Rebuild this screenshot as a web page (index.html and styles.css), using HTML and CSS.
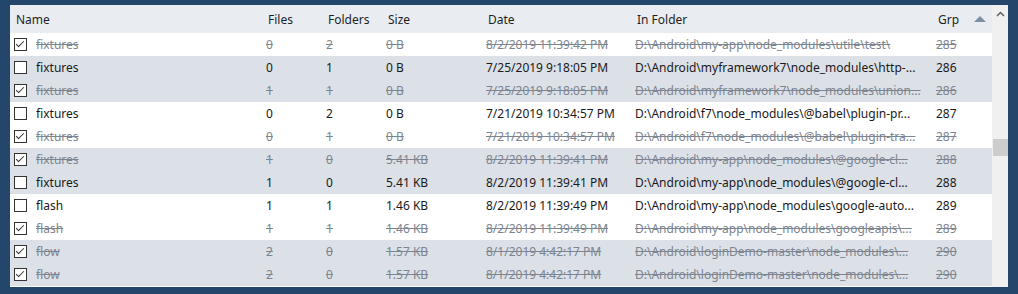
FILE: index.html
```html
<!DOCTYPE html>
<html lang="en">
<head>
    <meta charset="UTF-8">
    <title>Search Results</title>
    <link rel="stylesheet" href="styles.css">
</head>
<body>
    <div id="panel">
        <div class="list">
            <div class="row head">
                <div class="cell">Name</div>
                <div class="cell">Files</div>
                <div class="cell">Folders</div>
                <div class="cell">Size</div>
                <div class="cell">Date</div>
                <div class="cell">In Folder</div>
                <div class="cell grp">Grp <span class="sort"></span></div>
            </div>

            <div class="row done">
                <div class="cell name"><span class="check on"></span><span class="txt">fixtures</span></div>
                <div class="cell"><span class="txt">0</span></div>
                <div class="cell"><span class="txt">2</span></div>
                <div class="cell"><span class="txt">0 B</span></div>
                <div class="cell"><span class="txt">8/2/2019 11:39:42 PM</span></div>
                <div class="cell"><span class="txt">D:\Android\my-app\node_modules\utile\test\</span></div>
                <div class="cell"><span class="txt">285</span></div>
            </div>
            <div class="row alt">
                <div class="cell name"><span class="check"></span><span class="txt">fixtures</span></div>
                <div class="cell"><span class="txt">0</span></div>
                <div class="cell"><span class="txt">1</span></div>
                <div class="cell"><span class="txt">0 B</span></div>
                <div class="cell"><span class="txt">7/25/2019 9:18:05 PM</span></div>
                <div class="cell"><span class="txt">D:\Android\myframework7\node_modules\http-...</span></div>
                <div class="cell"><span class="txt">286</span></div>
            </div>
            <div class="row alt done">
                <div class="cell name"><span class="check on"></span><span class="txt">fixtures</span></div>
                <div class="cell"><span class="txt">1</span></div>
                <div class="cell"><span class="txt">1</span></div>
                <div class="cell"><span class="txt">0 B</span></div>
                <div class="cell"><span class="txt">7/25/2019 9:18:05 PM</span></div>
                <div class="cell"><span class="txt">D:\Android\myframework7\node_modules\union...</span></div>
                <div class="cell"><span class="txt">286</span></div>
            </div>
            <div class="row">
                <div class="cell name"><span class="check"></span><span class="txt">fixtures</span></div>
                <div class="cell"><span class="txt">0</span></div>
                <div class="cell"><span class="txt">2</span></div>
                <div class="cell"><span class="txt">0 B</span></div>
                <div class="cell"><span class="txt">7/21/2019 10:34:57 PM</span></div>
                <div class="cell"><span class="txt">D:\Android\f7\node_modules\@babel\plugin-pr...</span></div>
                <div class="cell"><span class="txt">287</span></div>
            </div>
            <div class="row done">
                <div class="cell name"><span class="check on"></span><span class="txt">fixtures</span></div>
                <div class="cell"><span class="txt">0</span></div>
                <div class="cell"><span class="txt">1</span></div>
                <div class="cell"><span class="txt">0 B</span></div>
                <div class="cell"><span class="txt">7/21/2019 10:34:57 PM</span></div>
                <div class="cell"><span class="txt">D:\Android\f7\node_modules\@babel\plugin-tra...</span></div>
                <div class="cell"><span class="txt">287</span></div>
            </div>
            <div class="row alt done">
                <div class="cell name"><span class="check on"></span><span class="txt">fixtures</span></div>
                <div class="cell"><span class="txt">1</span></div>
                <div class="cell"><span class="txt">0</span></div>
                <div class="cell"><span class="txt">5.41 KB</span></div>
                <div class="cell"><span class="txt">8/2/2019 11:39:41 PM</span></div>
                <div class="cell"><span class="txt">D:\Android\my-app\node_modules\@google-cl...</span></div>
                <div class="cell"><span class="txt">288</span></div>
            </div>
            <div class="row alt">
                <div class="cell name"><span class="check"></span><span class="txt">fixtures</span></div>
                <div class="cell"><span class="txt">1</span></div>
                <div class="cell"><span class="txt">0</span></div>
                <div class="cell"><span class="txt">5.41 KB</span></div>
                <div class="cell"><span class="txt">8/2/2019 11:39:41 PM</span></div>
                <div class="cell"><span class="txt">D:\Android\my-app\node_modules\@google-cl...</span></div>
                <div class="cell"><span class="txt">288</span></div>
            </div>
            <div class="row">
                <div class="cell name"><span class="check"></span><span class="txt">flash</span></div>
                <div class="cell"><span class="txt">1</span></div>
                <div class="cell"><span class="txt">1</span></div>
                <div class="cell"><span class="txt">1.46 KB</span></div>
                <div class="cell"><span class="txt">8/2/2019 11:39:49 PM</span></div>
                <div class="cell"><span class="txt">D:\Android\my-app\node_modules\google-auto...</span></div>
                <div class="cell"><span class="txt">289</span></div>
            </div>
            <div class="row done">
                <div class="cell name"><span class="check on"></span><span class="txt">flash</span></div>
                <div class="cell"><span class="txt">1</span></div>
                <div class="cell"><span class="txt">1</span></div>
                <div class="cell"><span class="txt">1.46 KB</span></div>
                <div class="cell"><span class="txt">8/2/2019 11:39:49 PM</span></div>
                <div class="cell"><span class="txt">D:\Android\my-app\node_modules\googleapis\...</span></div>
                <div class="cell"><span class="txt">289</span></div>
            </div>
            <div class="row alt done">
                <div class="cell name"><span class="check on"></span><span class="txt">flow</span></div>
                <div class="cell"><span class="txt">2</span></div>
                <div class="cell"><span class="txt">0</span></div>
                <div class="cell"><span class="txt">1.57 KB</span></div>
                <div class="cell"><span class="txt">8/1/2019 4:42:17 PM</span></div>
                <div class="cell"><span class="txt">D:\Android\loginDemo-master\node_modules\...</span></div>
                <div class="cell"><span class="txt">290</span></div>
            </div>
            <div class="row alt done">
                <div class="cell name"><span class="check on"></span><span class="txt">flow</span></div>
                <div class="cell"><span class="txt">2</span></div>
                <div class="cell"><span class="txt">0</span></div>
                <div class="cell"><span class="txt">1.57 KB</span></div>
                <div class="cell"><span class="txt">8/1/2019 4:42:17 PM</span></div>
                <div class="cell"><span class="txt">D:\Android\loginDemo-master\node_modules\...</span></div>
                <div class="cell"><span class="txt">290</span></div>
            </div>
        </div>

        <div class="scrollbar">
            <svg class="arrow" width="15" height="15" viewBox="0 0 15 15">
                <path d="M4 9 L7.5 5.5 L11 9" fill="none" stroke="#606060" stroke-width="1.5"/>
            </svg>
            <div class="thumb"></div>
        </div>
    </div>
</body>
</html>
```

FILE: styles.css
```css
body {
    margin: 0;
    padding: 5px 10px 0 10px;
    background-color: #24466a;
    font-family: "Noto Sans", "Open Sans", sans-serif;
    font-size: 12px;
    color: #1a1a1a;
}

#panel {
    display: flex;
    width: 998px;
    height: 282px;
    overflow: hidden;
}

.list {
    width: 982px;
    background-color: #fff;
}

.row {
    display: grid;
    grid-template-columns: 252px 60px 60px 100px 149px 301px 60px;
    height: 23px;
    align-items: center;
    background-color: #fff;
}

.row.alt {
    background-color: #dce0e7;
}

.row.head {
    height: 28px;
    background-color: #e9edf2;
    color: #1e1e1e;
}

.cell {
    padding-left: 4px;
    white-space: nowrap;
    overflow: hidden;
}

.head .cell {
    padding-left: 6px;
}

.cell.name {
    display: flex;
    align-items: center;
}

.grp {
    display: flex;
    align-items: center;
}

.sort {
    margin-left: 15px;
    width: 0;
    height: 0;
    border-left: 6px solid transparent;
    border-right: 6px solid transparent;
    border-bottom: 6px solid #7d8fa3;
}

.check {
    box-sizing: border-box;
    width: 13px;
    height: 13px;
    border: 1px solid #333;
    background-color: #fff;
    margin-right: 9px;
    flex: none;
    position: relative;
}

.check.on::after {
    content: "";
    position: absolute;
    left: 3px;
    top: 0px;
    width: 3px;
    height: 7px;
    border-right: 1.5px solid #333;
    border-bottom: 1.5px solid #333;
    transform: rotate(45deg);
}

.done .txt {
    color: #7d8590;
    text-decoration: line-through;
}

.scrollbar {
    width: 16px;
    background-color: #f0f0f0;
    position: relative;
}

.arrow {
    display: block;
    margin: 2px 0 0 1px;
}

.thumb {
    position: absolute;
    left: 1px;
    top: 134px;
    width: 15px;
    height: 17px;
    background-color: #cdcdcd;
}
```
